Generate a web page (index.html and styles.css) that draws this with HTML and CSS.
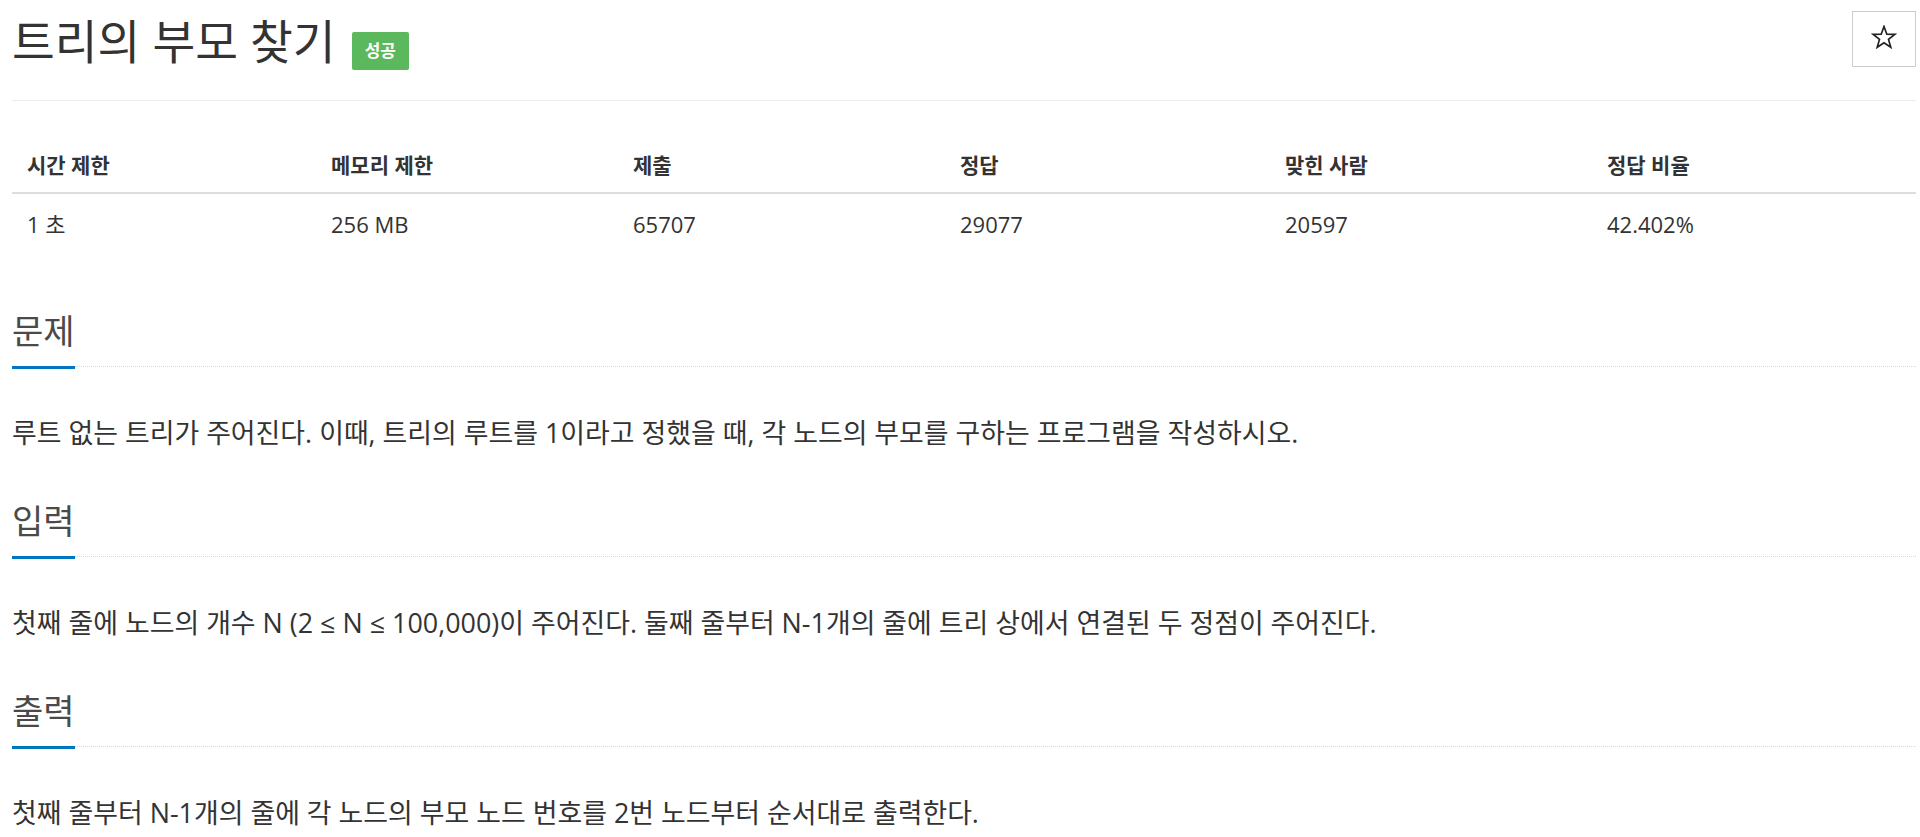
FILE: index.html
```html
<!DOCTYPE html>
<html lang="ko">
<head>
<meta charset="utf-8">
<title>트리의 부모 찾기</title>
<link rel="stylesheet" href="styles.css">
</head>
<body>
<div class="page">
  <div class="page-header">
    <div class="title-group">
      <h1 class="title">트리의 부모 찾기</h1>
      <span class="badge">성공</span>
    </div>
    <button class="star-btn" type="button" aria-label="즐겨찾기">
      <svg width="26" height="24" viewBox="0 0 26 24"><polygon points="13,1.5 15.8,9.2 23.8,9.4 17.5,14.4 19.8,22.3 13,17.7 6.2,22.3 8.5,14.4 2.2,9.4 10.2,9.2" fill="none" stroke="#222" stroke-width="1.7" stroke-linejoin="miter"/></svg>
    </button>
  </div>

  <table class="info">
    <thead>
      <tr><th>시간 제한</th><th>메모리 제한</th><th>제출</th><th>정답</th><th>맞힌 사람</th><th>정답 비율</th></tr>
    </thead>
    <tbody>
      <tr><td>1 초</td><td>256 MB</td><td>65707</td><td>29077</td><td>20597</td><td>42.402%</td></tr>
    </tbody>
  </table>

  <section class="section">
    <div class="section-head"><h2>문제</h2><span class="rule"></span></div>
    <p class="text">루트 없는 트리가 주어진다. 이때, 트리의 루트를 1이라고 정했을 때, 각 노드의 부모를 구하는 프로그램을 작성하시오.</p>
  </section>

  <section class="section">
    <div class="section-head"><h2>입력</h2><span class="rule"></span></div>
    <p class="text">첫째 줄에 노드의 개수 N (2 ≤ N ≤ 100,000)이 주어진다. 둘째 줄부터 N-1개의 줄에 트리 상에서 연결된 두 정점이 주어진다.</p>
  </section>

  <section class="section">
    <div class="section-head"><h2>출력</h2><span class="rule"></span></div>
    <p class="text">첫째 줄부터 N-1개의 줄에 각 노드의 부모 노드 번호를 2번 노드부터 순서대로 출력한다.</p>
  </section>
</div>
</body>
</html>
```

FILE: styles.css
```css
html, body {
  margin: 0;
  padding: 0;
  background: #fff;
}

body {
  font-family: "Open Sans", "Noto Sans CJK KR", sans-serif;
  color: #333;
}

.page {
  padding: 0 4px 0 12px;
}

.page-header {
  display: flex;
  justify-content: space-between;
  align-items: flex-start;
  padding-top: 11px;
  height: 89px;
  border-bottom: 1px solid #eee;
  box-sizing: content-box;
}

.title-group {
  display: flex;
  align-items: flex-start;
  margin-top: 5px;
}

.title {
  margin: 0;
  font-size: 46.5px;
  line-height: 50px;
  font-weight: 400;
  color: #333;
}

.badge {
  margin-left: 16px;
  margin-top: 16px;
  height: 38px;
  line-height: 38px;
  padding: 0 13px;
  background: #5cb85c;
  color: #fff;
  font-size: 17px;
  font-weight: 700;
  border-radius: 2px;
}

.star-btn {
  width: 64px;
  height: 56px;
  border: 1px solid #ccc;
  background: #fff;
  padding: 0;
  display: flex;
  align-items: center;
  justify-content: center;
  padding-bottom: 4px;
  cursor: pointer;
}

.info {
  width: 100%;
  margin-top: 29px;
  border-collapse: collapse;
  table-layout: fixed;
}

.info th,
.info td {
  box-sizing: border-box;
}

.info th:nth-child(1) { width: 304px; }
.info th:nth-child(2) { width: 302px; }
.info th:nth-child(3) { width: 327px; }
.info th:nth-child(4) { width: 325px; }
.info th:nth-child(5) { width: 322px; }

.info th {
  text-align: left;
  font-size: 21px;
  font-weight: 700;
  line-height: 30px;
  padding: 20px 15px 12px;
  border-bottom: 2px solid #ddd;
  color: #333;
}

.info td {
  text-align: left;
  font-size: 22px;
  line-height: 30px;
  padding: 15px 15px;
  color: #333;
}

.section {
  margin-top: 57px;
}

.section + .section {
  margin-top: 50px;
}

.section-head {
  display: flex;
  align-items: flex-end;
}

.section-head h2 {
  margin: 0;
  font-size: 34px;
  line-height: 40px;
  font-weight: 400;
  color: #4a4a4a;
  padding-bottom: 15px;
  border-bottom: 3px solid #0076c0;
}

.section-head .rule {
  flex: 1;
  border-bottom: 1px dotted #d8d8d8;
  margin-bottom: 2px;
}

.text {
  margin: 46px 0 0;
  font-size: 26.9px;
  line-height: 36px;
  color: #333;
}
```
